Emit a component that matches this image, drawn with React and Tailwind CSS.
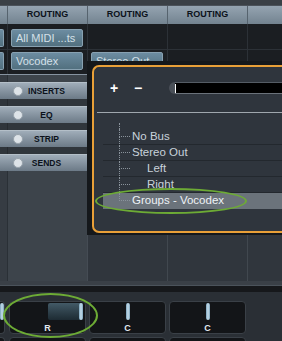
import React from 'react';

const sideButtons = ['INSERTS', 'EQ', 'STRIP', 'SENDS'];

const treeRows = [
  { label: 'No Bus', indent: false },
  { label: 'Stereo Out', indent: false },
  { label: 'Left', indent: true },
  { label: 'Right', indent: true },
  { label: 'Groups - Vocodex', indent: false, selected: true, last: true },
];

const RouteButton = ({ children }) => (
  <div className="h-[18px] w-[72px] rounded-[2px] border border-[#88a1b1] bg-linear-to-b from-[#6c8ca1] to-[#52707f] pl-[4px] text-[11px] leading-[16px] text-[#d4e0e8] whitespace-nowrap overflow-hidden">
    {children}
  </div>
);

const Handle = () => (
  <div className="w-[4px] h-[17px] rounded-[2px] bg-linear-to-r from-[#7aa2bb] via-[#c8dfec] to-[#7aa2bb]" />
);

const PanBox = ({ pan, className = '' }) => (
  <div className={`shrink-0 h-[33px] w-[77px] rounded-[4px] bg-[#131518] border border-[#3a4047] ${className}`}>
    {pan === 'R' && (
      <div className="flex h-[17px] mt-[1px] mx-[2px]">
        <div className="w-[36px]" />
        <div className="flex-1 flex justify-end rounded-[2px] bg-linear-to-b from-[#435a67] to-[#1d2b33]">
          <Handle />
        </div>
      </div>
    )}
    {pan === 'C' && (
      <div className="flex justify-center h-[17px] mt-[1px]">
        <Handle />
      </div>
    )}
    {pan && <div className="mt-[3px] text-center text-[9px] leading-[10px] font-bold text-[#e2e8ee]">{pan}</div>}
  </div>
);

export default function App() {
  return (
    <div className="relative w-[282px] h-[341px] overflow-hidden flex flex-col bg-[#2a2f35] font-['Liberation_Sans',Arial,sans-serif]">
      {/* top strip */}
      <div className="shrink-0 h-[6px] bg-[#3a4046] border-b border-[#4b525a]" />

      {/* header */}
      <div className="shrink-0 flex h-[18px] bg-linear-to-b from-[#95a4b1] to-[#738390] text-[9px] font-bold text-[#0c121a]">
        <div className="w-[8px] border-r border-[#56636e]" />
        {[0, 1, 2].map((i) => (
          <div key={i} className="w-[80px] border-r border-[#56636e] flex items-center justify-center">
            ROUTING
          </div>
        ))}
        <div className="flex-1" />
      </div>

      {/* row 1 */}
      <div className="shrink-0 flex h-[26px] bg-[#1b1e22] border-b border-[#2c3137]">
        <div className="w-[8px] border-r border-[#2c3137] pt-[5px]">
          <div className="h-[18px] w-[4px] rounded-r-[2px] border border-l-0 border-[#88a1b1] bg-linear-to-b from-[#6c8ca1] to-[#52707f]" />
        </div>
        <div className="w-[80px] border-r border-[#2c3137] pt-[5px] pl-[3px]">
          <RouteButton>All MIDI ...ts</RouteButton>
        </div>
        <div className="w-[80px] border-r border-[#2c3137]" />
        <div className="w-[80px] border-r border-[#2c3137]" />
        <div className="flex-1" />
      </div>

      {/* row 2 */}
      <div className="shrink-0 flex h-[24px] bg-[#1b1e22]">
        <div className="w-[8px] border-r border-[#2c3137] pt-[2px]">
          <div className="h-[18px] w-[4px] rounded-r-[2px] border border-l-0 border-[#88a1b1] bg-linear-to-b from-[#6c8ca1] to-[#52707f]" />
        </div>
        <div className="w-[80px] border-r border-[#2c3137] pt-[2px] pl-[3px]">
          <RouteButton>Vocodex</RouteButton>
        </div>
        <div className="w-[80px] border-r border-[#2c3137] pt-[2px] pl-[3px]">
          <RouteButton>Stereo Out</RouteButton>
        </div>
        <div className="w-[80px] border-r border-[#2c3137]" />
        <div className="flex-1" />
      </div>

      {/* lower channel area */}
      <div className="shrink-0 flex h-[207px]">
        <div className="w-[88px] border-r border-[#454c54] border-t border-t-[#8693a0] pt-[7px] bg-[linear-gradient(to_right,#363c43_7px,#2a3036_7px_8px,#3d444b_8px)]">
          <div className="flex flex-col gap-[7px] bg-[linear-gradient(to_right,#2f353b_7px,#262b30_7px_8px,#30363c_8px)]">
            {sideButtons.map((label) => (
              <div
                key={label}
                className="h-[17px] flex items-center bg-linear-to-b from-[#a0adb9] to-[#6c7a87] border-t border-[#b4bfc8]"
              >
                <div className="ml-[13px] w-[10px] h-[10px] rounded-full bg-[#dde3e8] border border-[#98a3ac]" />
                <span className="flex-1 text-center pr-[17px] text-[8.5px] font-bold text-[#0b111a]">{label}</span>
              </div>
            ))}
          </div>
        </div>
        <div className="w-[80px] border-r border-[#41484f] bg-[#30363d]" />
        <div className="w-[80px] border-r border-[#41484f] bg-[#30363d]" />
        <div className="flex-1 bg-[#30363d]" />
      </div>

      <div className="shrink-0 h-[4px] bg-[#3a4047]" />
      <div className="shrink-0 h-[1px] bg-[#4b535b]" />
      <div className="shrink-0 h-[6px] bg-[#16181b]" />

      {/* pan strip */}
      <div className="flex-1 min-h-0 overflow-hidden pt-[9px] flex flex-col gap-[3px]">
        {['R', null].map((row, r) => (
          <div key={r} className="shrink-0 flex">
            <div className="shrink-0 h-[33px] w-[5px] rounded-r-[4px] bg-[#131518] border border-l-0 border-[#3a4047] pt-[1px] flex justify-end">
              {row && <Handle />}
            </div>
            <PanBox pan={row} className="ml-[4px]" />
            <PanBox pan={row && 'C'} className="ml-[3px]" />
            <PanBox pan={row && 'C'} className="ml-[3px]" />
          </div>
        ))}
      </div>

      {/* output routing popup */}
      <div className="absolute left-[87px] top-[61px] w-[200px] h-[174px] bg-[#15181b] pl-[5px] pt-[4px] pb-[2px]">
        <div className="h-full rounded-l-[7px] border-2 border-r-0 border-[#e9a038] bg-[#2f353d] flex flex-col">
          <div className="mt-[15px] h-[12px] flex items-center pl-[14px] text-white font-bold">
            <span className="w-[12px] text-center text-[14px] leading-[12px]">+</span>
            <span className="ml-[12px] w-[12px] text-center text-[14px] leading-[12px]">−</span>
            <div className="ml-[25px] flex-1 h-[12px] flex rounded-l-full bg-[#4a5058] pl-[6px]">
              <div className="flex-1 bg-black border-t border-[#555c65] border-b border-b-[#6b727a] flex items-center">
                <div className="w-[1px] h-[9px] bg-white" />
              </div>
            </div>
          </div>

          <div className="mt-[18px] ml-[3px] h-[1px] bg-[#a0a7ae]" />

          <div className="mt-[10px] ml-[9px] flex flex-col text-[11.5px] leading-[15px]">
            <div className="ml-[16px] h-[6px] border-l border-dotted border-[#8a939c]" />
            {treeRows.map((row) => (
              <div
                key={row.label}
                className={`h-[16px] flex pl-[16px] border-b ${
                  row.selected ? 'bg-[#6b737b] border-[#6b737b] text-[#eef2f6]' : 'border-[#23282e] text-[#c8d2db]'
                }`}
              >
                <div className="w-[11px] self-stretch flex flex-col">
                  <div className="h-[8px] border-l border-b border-dotted border-[#8a939c]" />
                  {!row.last && <div className="flex-1 border-l border-dotted border-[#8a939c]" />}
                </div>
                <span className={`${row.indent ? 'ml-[17px]' : 'ml-[2px]'} whitespace-nowrap self-center`}>
                  {row.label}
                </span>
              </div>
            ))}
          </div>
        </div>
      </div>

      {/* highlight rings */}
      <div className="absolute left-[95px] top-[188px] w-[152px] h-[26px] rounded-[50%] border-2 border-[#6dab35]" />
      <div className="absolute left-[3px] top-[293px] w-[95px] h-[45px] rounded-[50%] border-2 border-[#6dab35]" />
    </div>
  );
}
